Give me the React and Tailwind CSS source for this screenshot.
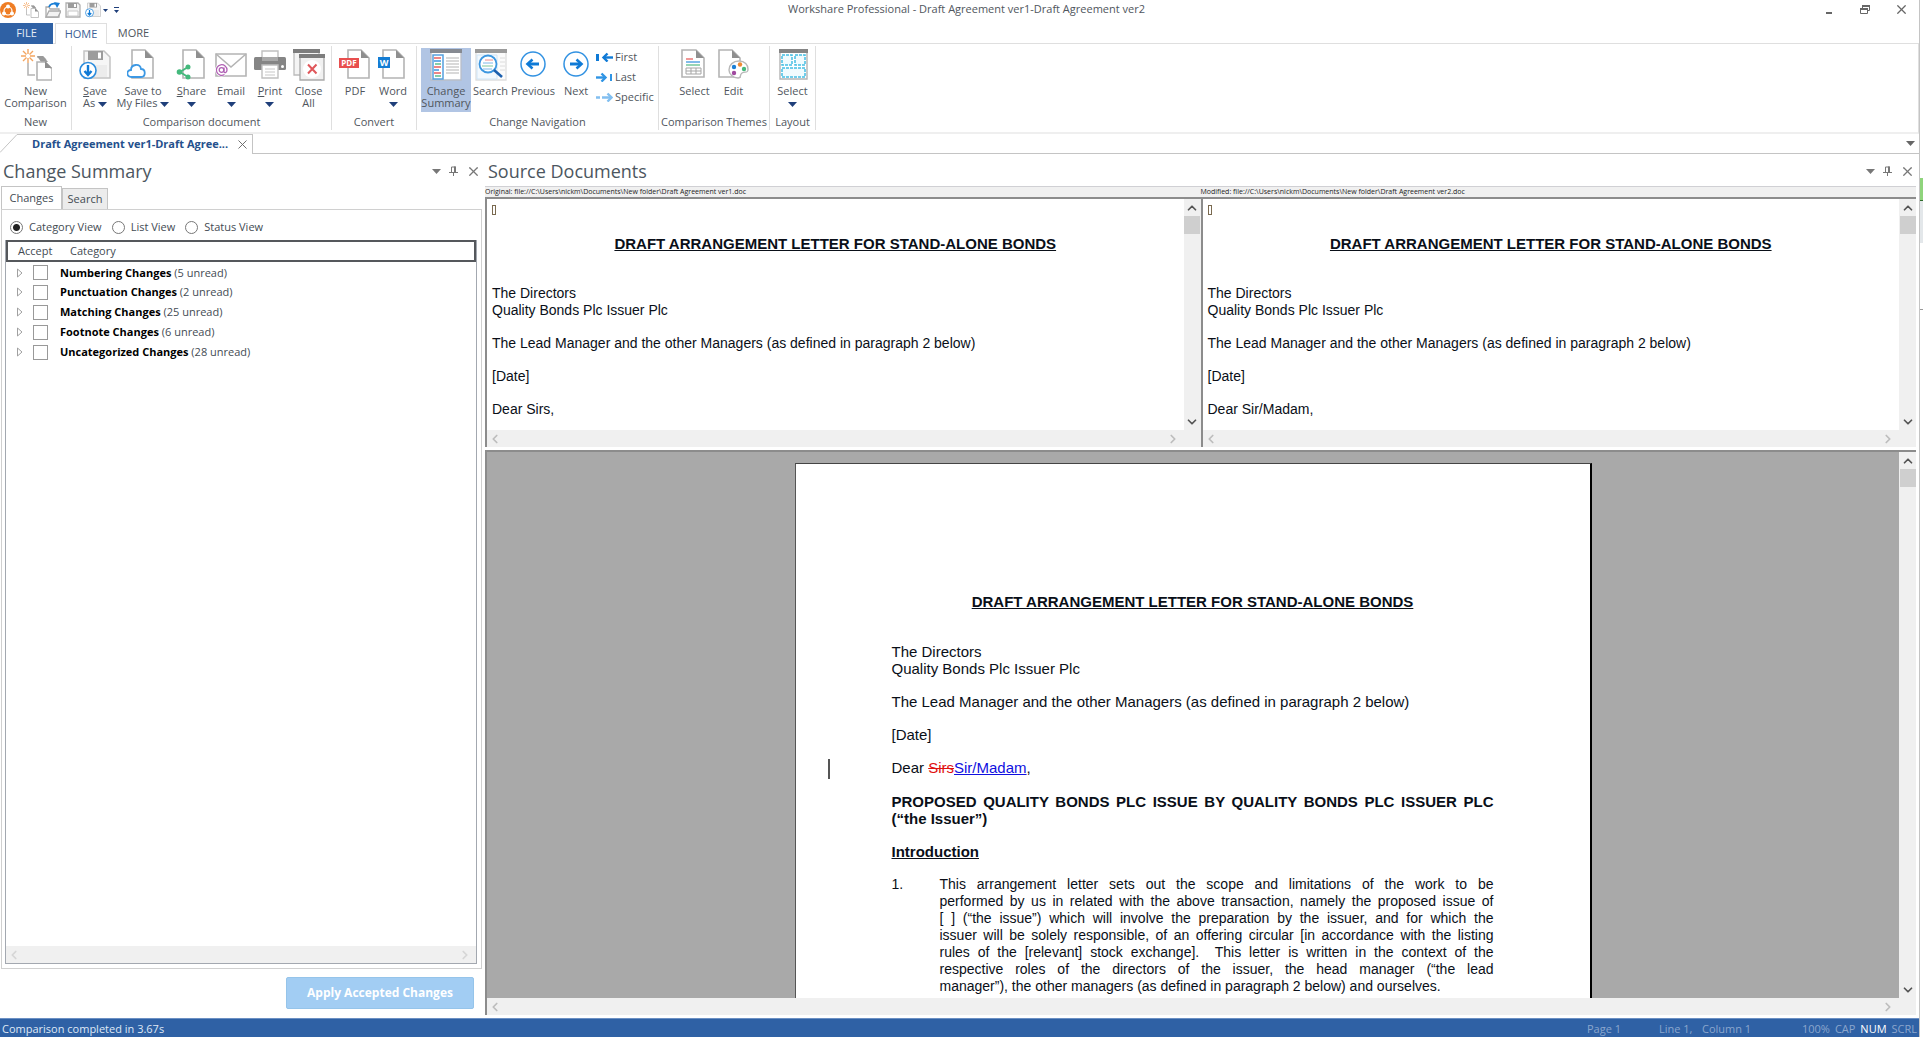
import { useState } from 'react';
import { ChevronUp, ChevronDown, ChevronLeft, ChevronRight, X } from 'lucide-react';

const CATEGORIES = [
  { id: 'numbering',     name: 'Numbering Changes',     unread: 5 },
  { id: 'punctuation',   name: 'Punctuation Changes',   unread: 2 },
  { id: 'matching',      name: 'Matching Changes',      unread: 25 },
  { id: 'footnote',      name: 'Footnote Changes',      unread: 6 },
  { id: 'uncategorized', name: 'Uncategorized Changes', unread: 28 },
];

const VIEWS = ['Category View', 'List View', 'Status View'];

const TITLE = 'DRAFT ARRANGEMENT LETTER FOR STAND-ALONE BONDS';

// Clause 1, broken where the rendered page breaks it
const CLAUSE_LINES = [
  'This arrangement letter sets out the scope and limitations of the work to be',
  'performed by us in related with the above transaction, namely the proposed issue of',
  '[ ] (“the issue”) which will involve the preparation by the issuer, and for which the',
  'issuer will be solely responsible, of an offering circular [in accordance with the listing',
  'rules of the [relevant] stock exchange].\u00a0 This letter is written in the context of the',
  'respective roles of the directors of the issuer, the head manager (“the lead',
];
const CLAUSE_END = 'manager”), the other managers (as defined in paragraph 2 below) and ourselves.';

// ── Icons ───────────────────────────────────────────────────────────
function Svg({ w = 32, h = 32, box, children, className = '' }) {
  return (
    <svg width={w} height={h} viewBox={box ?? `0 0 ${w} ${h}`} fill="none" aria-hidden="true" className={`shrink-0 ${className}`}>
      {children}
    </svg>
  );
}

function Caret({ className = 'text-[#1f3f7a]' }) {
  return (
    <Svg w={9} h={5} className={`inline-block ${className}`}>
      <path d="M0 0h9L4.500 5z" fill="currentColor" />
    </Svg>
  );
}

function PinIcon() {
  return (
    <Svg w={9} h={10}>
      <path d="M2.500 6V1h4M0 6.500h9M4.500 6.500V10" stroke="currentColor" />
      <path d="M6 .500v6" stroke="currentColor" strokeWidth="2" />
    </Svg>
  );
}

function Sheet({ x = 6, y = 1, w = 21, h = 28 }) {
  return (
    <>
      <path d={`M${x} ${y}h${w - 8}l8 8v${h - 8}h-${w}z`} fill="#fff" stroke="#b4b4b4" strokeWidth="1.6" />
      <path d={`M${x + w - 8} ${y}l8 8h-8z`} fill="#8f8f8f" />
    </>
  );
}

function SparkSheets() {
  return (
    <>
      <path d="M8 14v12h7M17 8h6l3 3" stroke="#b4b4b4" strokeWidth="1.6" />
      <path d="M17 7h6l5 6h-7z" fill="#9a9a9a" />
      <path d="M17 13h8l7 7v11H17z" fill="#fff" stroke="#b4b4b4" strokeWidth="1.6" />
      <path d="M25 12l7 7h-7z" fill="#8f8f8f" />
      <path d="M8 0v5M8 9v5M1 7h5M10 7h5M3 2l3.500 3.500M9.500 8.500L13 12M13 2L9.500 5.500M6.500 8.500L3 12" stroke="#f3a560" strokeWidth="1.400" />
    </>
  );
}

function FloppyDown() {
  return (
    <>
      <path d="M5 2h20l6 6v21H5z" fill="#f6f6f6" stroke="#c4c4c4" strokeWidth="1.500" />
      <path d="M9 2h15v9H9z" fill="#9c9c9c" />
      <path d="M19 3.500h3v6h-3z" fill="#fff" />
      <path d="M12 16h16v12H12z" fill="#ececec" />
      <circle cx="9" cy="21.500" r="8" fill="#fff" stroke="#2d8ddd" strokeWidth="1.600" />
      <path d="M9 16v9M5.500 22L9 26l3.500-4" stroke="#0f7ad6" strokeWidth="2.400" />
    </>
  );
}

const ICONS = {
  newComparison: <Svg><SparkSheets /></Svg>,
  save: <Svg><FloppyDown /></Svg>,
  saveTo: (
    <Svg>
      <Sheet x={5} y={1} />
      <path d="M5 28c-6 0-6-7-1-7 0-6 9-7 10-1 5 0 5 8 0 8z" fill="#fff" stroke="#3c98e4" strokeWidth="1.800" />
    </Svg>
  ),
  share: (
    <Svg>
      <Sheet x={7} y={1} />
      <path d="M12 18L4 23l8 5" stroke="#44b97c" strokeWidth="1.800" />
      <circle cx="12" cy="18" r="2.500" fill="#44b97c" />
      <circle cx="3.500" cy="23" r="2.800" fill="#44b97c" />
      <circle cx="12" cy="28" r="2.500" fill="#44b97c" />
    </Svg>
  ),
  email: (
    <Svg>
      <path d="M1 5h30v22H1z" fill="#fff" stroke="#b4b4b4" strokeWidth="1.600" />
      <path d="M1 5l15 13L31 5" stroke="#b4b4b4" strokeWidth="1.600" />
      <circle cx="6.500" cy="21" r="6.500" fill="#fff" />
      <path d="M9 18.500v4c0 2 3 1.500 3-1.500a5.300 5.300 0 1 0-2.500 4.500" stroke="#b062b4" strokeWidth="1.300" />
      <circle cx="6.500" cy="21" r="2.300" stroke="#b062b4" strokeWidth="1.300" />
    </Svg>
  ),
  print: (
    <Svg>
      <path d="M8 2h16v8H8z" fill="#fff" stroke="#c0c0c0" strokeWidth="1.400" />
      <rect x="0" y="8" width="32" height="13" rx="1.500" fill="#858585" />
      <path d="M8 8h16v4H8z" fill="#a9a9a9" />
      <circle cx="28.500" cy="17.500" r="1.500" fill="#fff" />
      <path d="M8 16h16v13H8z" fill="#fff" stroke="#c0c0c0" strokeWidth="1.400" />
      <path d="M11 20h10M11 23h10M11 26h10" stroke="#c8c8c8" strokeWidth="1.200" />
    </Svg>
  ),
  closeAll: (
    <Svg>
      <path d="M1 1h25v25H1z" fill="#f4f4f4" stroke="#bcbcbc" strokeWidth="1.300" />
      <path d="M0 0h27v4H0z" fill="#7d7d7d" />
      <path d="M7 6h24v25H7z" fill="#f1f1f1" stroke="#a9a9a9" strokeWidth="1.300" />
      <path d="M6 5h26v4H6z" fill="#7d7d7d" />
      <circle cx="19" cy="20" r="9" fill="#fff" />
      <path d="M15 15.500l8.500 9M23.500 15.500L15 24.500" stroke="#e0575b" strokeWidth="2" />
    </Svg>
  ),
  pdf: (
    <Svg>
      <Sheet x={9} y={1} />
      <rect x="0" y="9" width="20" height="10" fill="#e84f4f" />
      <text x="10" y="17" textAnchor="middle" fontSize="8" fontWeight="700" fill="#fff">PDF</text>
    </Svg>
  ),
  word: (
    <Svg>
      <Sheet x={6} y={1} />
      <rect x="1" y="8" width="12" height="11" fill="#147dd4" />
      <text x="7" y="17" textAnchor="middle" fontSize="9" fontWeight="700" fill="#fff">W</text>
    </Svg>
  ),
  changeSummary: (
    <Svg>
      <path d="M1 1h30v30H1z" fill="#fff" stroke="#b9bec8" strokeWidth="1.300" />
      <path d="M0 0h32v4H0z" fill="#868a92" />
      <path d="M3 6h10v24H3z" fill="#fff" stroke="#56a0de" strokeWidth="1.500" />
      <path d="M4 9h7M4 18h7M4 24h7" stroke="#e8605f" strokeWidth="1.300" />
      <path d="M4 12h7M4 21h5" stroke="#3f97e0" strokeWidth="1.300" />
      <path d="M5 15h6M5 27h6" stroke="#5fbf8c" strokeWidth="1.300" />
      <path d="M16 9h13M16 12h13M16 15h13M16 18h13M16 21h13M16 24h13" stroke="#cdcdcd" strokeWidth="1.300" />
    </Svg>
  ),
  search: (
    <Svg>
      <path d="M1 1h30v30H1z" fill="#fbfbfb" stroke="#dedede" strokeWidth="1.300" />
      <path d="M0 0h32v4H0z" fill="#9b9b9b" />
      <path d="M2 6h20v24H2z" fill="#f3f9fe" stroke="#cfe5f7" />
      <path d="M25 9h5M25 13h5M25 17h5M25 21h5" stroke="#dcdcdc" />
      <circle cx="13" cy="15" r="8.500" fill="#fff" stroke="#3d97e0" strokeWidth="1.800" />
      <path d="M10 11h8" stroke="#e88" />
      <path d="M8 14h10M8 20h9" stroke="#7db8e8" />
      <path d="M7 17h11" stroke="#7cc79d" />
      <path d="M19 21l8 7" stroke="#1b5fae" strokeWidth="2.600" />
    </Svg>
  ),
  previous: (
    <Svg>
      <circle cx="16" cy="15" r="12" stroke="#3292e2" strokeWidth="1.500" />
      <path d="M22 15H12" stroke="#0f7ad6" strokeWidth="3" />
      <path d="M15.500 10.500L10.500 15l5 4.500" stroke="#0f7ad6" strokeWidth="2.600" />
    </Svg>
  ),
  next: (
    <Svg>
      <circle cx="16" cy="15" r="12" stroke="#3292e2" strokeWidth="1.500" />
      <path d="M10 15h10" stroke="#0f7ad6" strokeWidth="3" />
      <path d="M16.500 10.500l5 4.500-5 4.500" stroke="#0f7ad6" strokeWidth="2.600" />
    </Svg>
  ),
  first: (
    <Svg w={17} h={10}>
      <path d="M0 2h3v7H0z" fill="#0f7ad6" />
      <path d="M17 5.500H9" stroke="#0f7ad6" strokeWidth="2.400" />
      <path d="M11.500 1.500l-4 4 4 4" stroke="#0f7ad6" strokeWidth="2.400" />
    </Svg>
  ),
  last: (
    <Svg w={17} h={10}>
      <path d="M14 2h2v7h-2z" fill="#2f94e4" />
      <path d="M0 5.500h8" stroke="#2f94e4" strokeWidth="2.400" />
      <path d="M5.500 1.500l4 4-4 4" stroke="#2f94e4" strokeWidth="2.400" />
    </Svg>
  ),
  specific: (
    <Svg w={17} h={10}>
      <path d="M0 5.500h4M6 5.500h9" stroke="#82bff0" strokeWidth="2.400" />
      <path d="M11.500 1.500l4 4-4 4" stroke="#82bff0" strokeWidth="2.400" />
    </Svg>
  ),
  themeSelect: (
    <Svg>
      <Sheet x={3} y={1} w={22} h={27} />
      <path d="M7 10h7" stroke="#e8605f" strokeWidth="1.300" />
      <path d="M7 13h14" stroke="#3f97e0" strokeWidth="1.300" />
      <path d="M7 16h14" stroke="#5fbf8c" strokeWidth="1.300" />
      <path d="M7 19h15v6H7zM7 22h15M12 19v6M17 19v6" stroke="#a5a5a5" />
    </Svg>
  ),
  themeEdit: (
    <Svg>
      <Sheet x={1} y={1} w={21} h={27} />
      <path d="M21 12c6 0 9 4 9 8 0 5-3 2-6 4-3 2 0 5-4 5-5 0-9-4-9-8 0-5 4-9 10-9z" fill="#fff" stroke="#b8b8b8" strokeWidth="1.400" />
      <circle cx="16" cy="18" r="2.200" fill="#1b7fd6" />
      <circle cx="22" cy="15.500" r="2.200" fill="#ee8a34" />
      <circle cx="26" cy="20" r="2.200" fill="#45b97c" />
      <circle cx="16" cy="24" r="2.200" fill="#a0499f" />
    </Svg>
  ),
  layout: (
    <Svg>
      <path d="M3 1h27v29H3z" fill="#fff" stroke="#b4b4b4" strokeWidth="1.400" />
      <path d="M2 0h29v4H2z" fill="#858585" />
      <path d="M5 6h10v10H5zM18 6h10v10H18zM5 19h23v9H5z" fill="#f1fbfe" stroke="#45bfe3" strokeWidth="1.500" strokeDasharray="3 1" />
    </Svg>
  ),
};

// ── Ribbon ──────────────────────────────────────────────────────────
function RibbonButton({ icon, children, width, active }) {
  return (
    <button
      className={`flex h-16 flex-col items-center pt-px leading-3 ${width} ${active ? 'bg-[#b1c5e4]' : ''}`}
    >
      {ICONS[icon]}
      <span className="mt-1 whitespace-nowrap">{children}</span>
    </button>
  );
}

function RibbonGroup({ label, className, children }) {
  return (
    <section aria-label={label} className={`my-0.5 flex flex-col justify-between border-r border-[#dfdfdf] ${className}`}>
      <div className="flex items-start pt-0.5">{children}</div>
      <h2 className="whitespace-nowrap text-center">{label}</h2>
    </section>
  );
}

function JumpButton({ icon, children }) {
  return (
    <button className="flex h-5 items-center gap-0.5 pb-0.5">
      {ICONS[icon]}
      {children}
    </button>
  );
}

function CaretLine() {
  return <span className="block text-center"><Caret /></span>;
}

function Ribbon() {
  return (
    <div className="flex h-[90px] shrink-0 border-b-2 border-[#efefef] border-r border-r-[#dfdfdf] text-[11px] leading-4 text-[#50565d]">
      <RibbonGroup label="New" className="w-[72px] items-center">
        <RibbonButton icon="newComparison" width="w-[70px]">New<br />Comparison</RibbonButton>
      </RibbonGroup>
      <RibbonGroup label="Comparison document" className="w-[260px] px-0.5">
        <RibbonButton icon="save" width="w-[42px]"><u>S</u>ave<br />As <Caret /></RibbonButton>
        <RibbonButton icon="saveTo" width="w-[54px]">Save to<br />My Files <Caret /></RibbonButton>
        <RibbonButton icon="share" width="w-[43px]"><u>S</u>hare<CaretLine /></RibbonButton>
        <RibbonButton icon="email" width="w-[36px]">Email<CaretLine /></RibbonButton>
        <RibbonButton icon="print" width="w-[42px]"><u>P</u>rint<CaretLine /></RibbonButton>
        <RibbonButton icon="closeAll" width="w-[35px]">Close<br />All</RibbonButton>
      </RibbonGroup>
      <RibbonGroup label="Convert" className="w-[85px] px-1">
        <RibbonButton icon="pdf" width="w-[38px]">PDF</RibbonButton>
        <RibbonButton icon="word" width="w-[38px]">Word<CaretLine /></RibbonButton>
      </RibbonGroup>
      <RibbonGroup label="Change Navigation" className="w-[242px] px-1">
        <RibbonButton icon="changeSummary" width="w-[50px]" active>Change<br />Summary</RibbonButton>
        <RibbonButton icon="search" width="w-[39px]">Search</RibbonButton>
        <RibbonButton icon="previous" width="w-[46px]">Previous</RibbonButton>
        <RibbonButton icon="next" width="w-[40px]">Next</RibbonButton>
        <div className="flex flex-col">
          <JumpButton icon="first">First</JumpButton>
          <JumpButton icon="last">Last</JumpButton>
          <JumpButton icon="specific">Specific</JumpButton>
        </div>
      </RibbonGroup>
      <RibbonGroup label="Comparison Themes" className="w-[111px] items-center">
        <RibbonButton icon="themeSelect" width="w-[39px]">Select</RibbonButton>
        <RibbonButton icon="themeEdit" width="w-[39px]">Edit</RibbonButton>
      </RibbonGroup>
      <RibbonGroup label="Layout" className="w-[46px] items-center">
        <RibbonButton icon="layout" width="w-[40px]">Select<CaretLine /></RibbonButton>
      </RibbonGroup>
    </div>
  );
}

function TitleBar() {
  return (
    <header className="flex h-[23px] shrink-0 items-start text-[11px] leading-4">
      <div className="flex flex-1 items-center gap-1 pt-0.5">
        <Svg w={16} h={16}>
          <circle cx="8" cy="8" r="8" fill="#ef7d24" />
          <circle cx="8" cy="9" r="4" stroke="#fff" strokeWidth="1.200" />
          <circle cx="8" cy="4.500" r="2" fill="#fff" />
          <circle cx="4" cy="11.500" r="2" fill="#fff" />
          <circle cx="12" cy="11.500" r="2" fill="#fff" />
        </Svg>
        <button aria-label="New comparison" className="ml-0.5"><Svg w={18} h={16} box="0 0 34 32"><SparkSheets /></Svg></button>
        <button aria-label="Open">
          <Svg w={17} h={16}>
            <path d="M2 15V5h3l1 2h9v8z" fill="#fff" stroke="#ababab" strokeWidth="1.300" />
            <path d="M2 15l3-6h12l-3 6z" fill="#f3f3f3" stroke="#ababab" strokeWidth="1.300" />
            <path d="M5 5c1-3 4-4 7-3" stroke="#1b7fd6" strokeWidth="1.800" />
            <path d="M10 0l6 1-3 5z" fill="#1b7fd6" />
          </Svg>
        </button>
        <button aria-label="Save">
          <Svg w={16} h={16}>
            <path d="M1 1h12l2 2v12H1z" fill="#f3f3f3" stroke="#b0b0b0" strokeWidth="1.300" />
            <path d="M3 1h9v5H3z" fill="#9c9c9c" />
            <path d="M9 2h2v3H9z" fill="#fff" />
            <path d="M3 9h10v5H3z" fill="#fff" stroke="#c8c8c8" />
          </Svg>
        </button>
        <button aria-label="Save as" className="flex items-center gap-0.5">
          <Svg w={16} h={16} box="0 0 32 32"><FloppyDown /></Svg>
          <Svg w={5} h={3}><path d="M0 0h5L2.500 3z" fill="#1f3f7a" /></Svg>
        </button>
        <button aria-label="Customize toolbar" className="ml-0.5">
          <Svg w={5} h={6}><path d="M0 0h5v1H0zM0 3h5L2.500 6z" fill="#1f3f7a" /></Svg>
        </button>
      </div>
      <h1 className="ml-6 pt-px text-[#50565d]">Workshare Professional - Draft Agreement ver1-Draft Agreement ver2</h1>
      <div className="flex flex-1 items-center justify-end gap-6 pr-2.5 pt-0.5 text-[#666]">
        <button aria-label="Minimize" className="mr-1"><Svg w={6} h={10}><path d="M0 7h6v2H0z" fill="currentColor" /></Svg></button>
        <button aria-label="Restore">
          <Svg w={10} h={10}>
            <path d="M2.500 3V.500h7v5H7M.500 3.500h7v5h-7z" stroke="currentColor" />
            <path d="M2 0h8v2H2zM0 3h8v2H0z" fill="currentColor" />
          </Svg>
        </button>
        <button aria-label="Close"><X size={15} /></button>
      </div>
    </header>
  );
}

function MenuTabs() {
  return (
    <nav className="flex h-[21px] shrink-0 items-stretch text-[11px] text-[#50565d]">
      <button className="w-[53px] bg-[#2f61a5] text-[#e6ecf5]">FILE</button>
      <span className="w-0.5 border-b border-[#dfdfdf]" />
      <button className="w-[52px] border-x border-t border-[#dfdfdf] text-[#3c5f95]">HOME</button>
      <div className="flex-1 border-b border-[#dfdfdf]">
        <button className="h-full w-[53px]">MORE</button>
      </div>
    </nav>
  );
}

function DocumentTabs() {
  return (
    <div className="flex h-5 shrink-0 text-[11px]">
      <Svg w={18} h={20}><path d="M0 18.500L17 .500h1" stroke="#c4c4c4" /></Svg>
      <div className="flex w-[235px] items-center border-r border-t border-[#c4c4c4] pl-3.5">
        <a href="#comparison" className="flex-1 whitespace-nowrap font-bold text-[#24508c]">Draft Agreement ver1-Draft Agree...</a>
        <button aria-label="Close document" className="pr-0.5 text-[#666]"><X size={15} strokeWidth={1.5} /></button>
      </div>
      <div className="flex flex-1 items-center justify-end border-b border-[#c4c4c4] pr-1">
        <button aria-label="Document list" className="flex"><Caret className="text-[#666]" /></button>
      </div>
    </div>
  );
}

// ── Panels ──────────────────────────────────────────────────────────
function PanelHeader({ title }) {
  return (
    <div className="flex h-8 shrink-0 items-center justify-between pl-[3px] pr-px pt-0.5 text-[#4c5660]">
      <h2 className="text-[18px] leading-6">{title}</h2>
      <div className="flex items-center gap-2 text-[#777]">
        <button aria-label={`${title} options`} className="flex"><Caret className="text-[#777]" /></button>
        <button aria-label={`Pin ${title}`}><PinIcon /></button>
        <button aria-label={`Close ${title}`}><X size={15} /></button>
      </div>
    </div>
  );
}

function VScroll({ className = '' }) {
  return (
    <div className={`flex w-[17px] shrink-0 flex-col items-center bg-[#f0f0f0] text-[#555] ${className}`}>
      <button aria-label="Scroll up" className="flex h-[17px] items-center"><ChevronUp size={14} strokeWidth={3} /></button>
      <div className="h-[18px] w-4 bg-[#cfcfcf]" />
      <button aria-label="Scroll down" className="mt-auto flex h-[17px] items-center"><ChevronDown size={14} strokeWidth={3} /></button>
    </div>
  );
}

function HScroll({ color = 'text-[#bdbdbd]' }) {
  return (
    <div className={`flex h-[17px] shrink-0 items-center justify-between bg-[#f0f0f0] pl-px pr-1 ${color}`}>
      <button aria-label="Scroll left"><ChevronLeft size={14} strokeWidth={3} /></button>
      <button aria-label="Scroll right"><ChevronRight size={14} strokeWidth={3} /></button>
    </div>
  );
}

function CategoryTable() {
  return (
    <table className="w-full border-collapse">
      <thead>
        <tr className="h-5 border-2 border-[#55585c] text-left">
          <th scope="col" className="w-[53px] p-0 pl-2.5 font-normal">Accept</th>
          <th scope="col" className="p-0 pl-2.5 font-normal">Category</th>
        </tr>
      </thead>
      <tbody>
        {CATEGORIES.map((cat) => (
          <tr key={cat.id} className="h-5">
            <td className="p-0 pl-2.5">
              <div className="flex items-center gap-2.5 pt-0.5">
                <button aria-label={`Expand ${cat.name}`}>
                  <Svg w={6} h={10}><path d="M.500 1l4.500 4L.500 9z" stroke="#a0a0a0" /></Svg>
                </button>
                <input
                  id={cat.id}
                  type="checkbox"
                  className="size-[15px] appearance-none border border-[#999] bg-white checked:bg-[#2f61a5]"
                />
              </div>
            </td>
            <td className="p-0 pt-0.5">
              <label htmlFor={cat.id}>
                <b className="text-black">{cat.name}</b> ({cat.unread} unread)
              </label>
            </td>
          </tr>
        ))}
      </tbody>
    </table>
  );
}

function ChangeSummary() {
  const [view, setView] = useState(VIEWS[0]);

  return (
    <aside className="flex w-[485px] shrink-0 flex-col pr-[3px] text-[11px] leading-4 text-[#434b53]">
      <PanelHeader title="Change Summary" />
      <div role="tablist" className="ml-px flex h-[23px] shrink-0 items-stretch">
        <button role="tab" aria-selected="true" className="w-[61px] border-x border-t border-[#c4c4c4]">Changes</button>
        <button role="tab" aria-selected="false" className="mt-0.5 w-[46px] border-x border-t border-[#c4c4c4] bg-[#ececec]">Search</button>
      </div>
      <div className="ml-px flex min-h-0 flex-1 flex-col border border-[#d0d0d0] p-1 pl-[3px]">
        <div role="radiogroup" aria-label="View" className="flex h-[26px] shrink-0 items-center gap-2.5 pl-[5px]">
          {VIEWS.map((v) => (
            <label key={v} className="flex items-center gap-1.5">
              <input
                type="radio"
                name="view"
                checked={view === v}
                onChange={() => setView(v)}
                className="size-[13px] appearance-none rounded-full border border-[#777] checked:bg-[radial-gradient(circle,#222_3px,transparent_4px)]"
              />
              {v}
            </label>
          ))}
        </div>
        <div className="flex min-h-0 flex-1 flex-col justify-between border border-t-0 border-[#a3a8b0]">
          <CategoryTable />
          <HScroll color="text-[#d6d6d6]" />
        </div>
      </div>
      <div className="flex h-[49px] shrink-0 items-start justify-end pr-2 pt-2">
        <button disabled className="h-8 w-[188px] rounded-xs border border-[#95c4ea] bg-[#a2cdf3] text-[12px] font-bold text-white">
          Apply Accepted Changes
        </button>
      </div>
    </aside>
  );
}

function SourcePane({ label, path, salutation }) {
  return (
    <section className="flex min-w-0 flex-1 flex-col">
      <h3 className="h-[10px] shrink-0 whitespace-nowrap bg-[#f0f0f0] text-[7px] leading-[10px] text-[#222]">{label}: {path}</h3>
      <div className="flex min-h-0 flex-1 border-l-2 border-t-2 border-[#8c8c8c]">
        <div className="flex min-w-0 flex-1 flex-col">
          <article className="flex-1 space-y-4 bg-white px-[5px] pt-1.5 font-['Liberation_Sans',Arial,sans-serif] text-[14px] leading-[17px] text-[#0a0f18]">
            <div className="mb-5 h-[10px] w-1 border border-[#7a6a50]" />
            <h4 className="mb-[33px] text-center text-[15px] font-bold underline">{TITLE}</h4>
            <p>The Directors<br />Quality Bonds Plc Issuer Plc</p>
            <p>The Lead Manager and the other Managers (as defined in paragraph 2 below)</p>
            <p>[Date]</p>
            <p>{salutation}</p>
          </article>
          <HScroll />
        </div>
        <VScroll className="pb-[17px]" />
      </div>
    </section>
  );
}

function ComparisonDocument() {
  return (
    <section aria-label="Comparison" className="mt-[3px] flex min-h-0 flex-1 border-l-2 border-t-2 border-[#8c8c8c]">
      <div className="flex min-w-0 flex-1 flex-col">
        <div className="min-h-0 flex-1 overflow-hidden bg-[#a9a9a9] pt-[11px]">
          <article className="mx-auto h-[1120px] w-[797px] border-b border-l border-r-2 border-t border-black border-l-[#555] border-t-[#444] bg-white px-24 pt-[129px] font-['Liberation_Sans',Arial,sans-serif] text-[15px] leading-[17px] text-[#0a0f18]">
            <h3 className="text-center font-bold underline">{TITLE}</h3>
            <div className="mt-[33px] space-y-4">
              <p>The Directors<br />Quality Bonds Plc Issuer Plc</p>
              <p>The Lead Manager and the other Managers (as defined in paragraph 2 below)</p>
              <p>[Date]</p>
              {/* change bar hangs in the page margin */}
              <p className="relative">
                <span className="absolute -left-16 h-5 w-0.5 bg-[#555]" />
                Dear <del className="text-[#e01010]">Sirs</del>
                <ins className="text-[#1010e0]">Sir/Madam</ins>,
              </p>
            </div>
            <div className="mt-[17px] space-y-4">
              <p className="text-justify font-bold">
                PROPOSED QUALITY BONDS PLC ISSUE BY QUALITY BONDS PLC ISSUER PLC (“the Issuer”)
              </p>
              <h4 className="font-bold underline">Introduction</h4>
              <div className="flex text-[14px]">
                <span className="w-12 shrink-0">1.</span>
                <p className="flex-1">
                  {CLAUSE_LINES.map((line) => (
                    <span key={line} className="block text-justify [text-align-last:justify]">{line} </span>
                  ))}
                  {CLAUSE_END}
                </p>
              </div>
            </div>
          </article>
        </div>
        <HScroll />
      </div>
      <VScroll className="pb-[17px]" />
    </section>
  );
}

function StatusBar() {
  return (
    <footer className="flex h-[19px] shrink-0 items-center border-t border-[#6c90c4] bg-[#2f61a5] px-0.5 pt-0.5 text-[11px] leading-4 text-[#8ba6cd]">
      <span className="flex-1 text-[#dfe8f5]">Comparison completed in 3.67s</span>
      <span className="w-[72px]">Page 1</span>
      <span className="w-[43px]">Line 1,</span>
      <span className="w-[100px]">Column 1</span>
      <span className="flex w-[115px] justify-between">
        <span>100%</span>
        <span>CAP</span>
        <span className="text-white">NUM</span>
        <span>SCRL</span>
      </span>
    </footer>
  );
}

// Sliver of the desktop that shows past the window's right edge
function DesktopEdge() {
  return (
    <div className="flex w-1 shrink-0 flex-col border-l border-[#c4c4c4] pt-[178px]">
      <div className="h-[23px] border-b border-[#2f6b2a] bg-[#8fd47c]" />
      <div className="h-[42px] bg-[#e3e7ea]" />
      <div className="h-[67px] border-b border-[#999]" />
    </div>
  );
}

export default function App() {
  return (
    <div className="flex h-screen overflow-hidden bg-white font-['Open_Sans','Noto_Sans',sans-serif]">
      <div className="flex min-w-0 flex-1 flex-col">
        <TitleBar />
        <MenuTabs />
        <Ribbon />
        <DocumentTabs />
        <main className="flex min-h-0 flex-1">
          <ChangeSummary />
          <div className="flex min-w-0 flex-1 flex-col pb-[3px] pr-[3px]">
            <PanelHeader title="Source Documents" />
            <div className="flex h-[261px] shrink-0 border-t border-[#d0d0d4]">
              <SourcePane
                label="Original"
                path="file://C:\Users\nickm\Documents\New folder\Draft Agreement ver1.doc"
                salutation="Dear Sirs,"
              />
              <SourcePane
                label="Modified"
                path="file://C:\Users\nickm\Documents\New folder\Draft Agreement ver2.doc"
                salutation="Dear Sir/Madam,"
              />
            </div>
            <ComparisonDocument />
          </div>
        </main>
        <StatusBar />
      </div>
      <DesktopEdge />
    </div>
  );
}
